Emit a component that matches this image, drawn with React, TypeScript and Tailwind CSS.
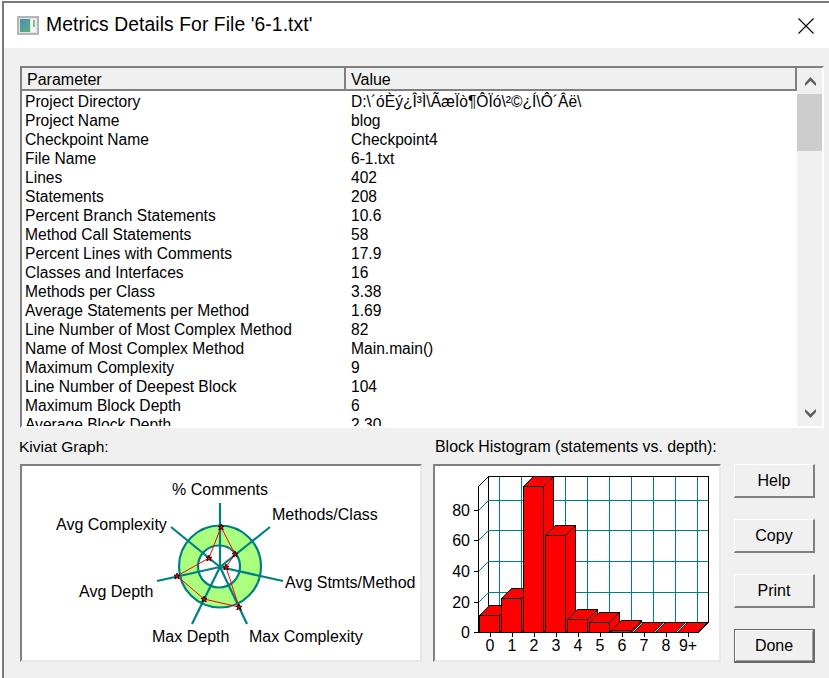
const ROWS: [string, string][] = [
  ["Project Directory", "D:\\´óÈý¿Î³Ì\\ÃæÏò¶ÔÏó\\²©¿Í\\Ô´Âë\\"],
  ["Project Name", "blog"],
  ["Checkpoint Name", "Checkpoint4"],
  ["File Name", "6-1.txt"],
  ["Lines", "402"],
  ["Statements", "208"],
  ["Percent Branch Statements", "10.6"],
  ["Method Call Statements", "58"],
  ["Percent Lines with Comments", "17.9"],
  ["Classes and Interfaces", "16"],
  ["Methods per Class", "3.38"],
  ["Average Statements per Method", "1.69"],
  ["Line Number of Most Complex Method", "82"],
  ["Name of Most Complex Method", "Main.main()"],
  ["Maximum Complexity", "9"],
  ["Line Number of Deepest Block", "104"],
  ["Maximum Block Depth", "6"],
  ["Average Block Depth", "2.30"],
];

const TEAL = "#008080";

function Star({ x, y }: { x: number; y: number }) {
  return (
    <path
      d={`M${x} ${y - 3}L${x + 0.8} ${y - 0.8}L${x + 3} ${y - 0.8}L${x + 1.4} ${y + 0.7}L${x + 2.2} ${y + 3}L${x} ${y + 1.6}L${x - 2.2} ${y + 3}L${x - 1.4} ${y + 0.7}L${x - 3} ${y - 0.8}L${x - 0.8} ${y - 0.8}Z`}
      fill="#e00000"
      stroke="#000"
      strokeWidth={0.8}
    />
  );
}

function Kiviat() {
  const spokes = [
    [220, 503],
    [270, 527],
    [283, 581],
    [247, 624],
    [192, 624],
    [157, 581],
    [171, 527],
  ];
  const pts: [number, number][] = [
    [221, 527],
    [235, 554],
    [226, 567],
    [239, 607],
    [204, 599],
    [177, 576],
    [209, 558],
  ];
  const labels: [string, number, number][] = [
    ["% Comments", 172, 495],
    ["Methods/Class", 272, 520],
    ["Avg Complexity", 56, 530],
    ["Avg Stmts/Method", 285, 588],
    ["Avg Depth", 79, 597],
    ["Max Depth", 152, 642],
    ["Max Complexity", 249, 642],
  ];
  return (
    <svg width="398" height="194" viewBox="22 466 398 194" className="block">
      <circle cx="220" cy="566.5" r="41" fill="#aaff7f" stroke={TEAL} strokeWidth="2.2" />
      <circle cx="219" cy="566.5" r="21" fill="#fff" stroke={TEAL} strokeWidth="2.2" />
      {spokes.map(([x, y]) => (
        <line key={`${x}-${y}`} x1="220" y1="567" x2={x} y2={y} stroke={TEAL} strokeWidth="2.2" />
      ))}
      <polygon points={pts.map((p) => p.join(",")).join(" ")} fill="none" stroke="#ff0000" strokeWidth="1" />
      {pts.map(([x, y]) => (
        <Star key={`${x}-${y}`} x={x} y={y} />
      ))}
      {labels.map(([t, x, y]) => (
        <text key={t} x={x} y={y} fontSize="16" fill="#000">
          {t}
        </text>
      ))}
    </svg>
  );
}

function Histogram() {
  const tops = [615, 598, 486, 535, 619, 622, 630, 632, 632, 632];
  const xLabels = ["0", "1", "2", "3", "4", "5", "6", "7", "8", "9+"];
  const yLabels: [string, number][] = [
    ["80", 510],
    ["60", 540],
    ["40", 571],
    ["20", 602],
    ["0", 632],
  ];
  return (
    <svg width="284" height="194" viewBox="435 466 284 194" className="block" shapeRendering="crispEdges">
      <rect x="488.5" y="476.5" width="220" height="146" fill="#fff" stroke="#000" />
      {[500, 530, 561, 592].map((y) => (
        <g key={y}>
          <line x1="489" y1={y + 0.5} x2="708" y2={y + 0.5} stroke={TEAL} />
          <line x1="478.5" y1={y + 10.5} x2="488.5" y2={y + 0.5} stroke={TEAL} />
          <line x1="474" y1={y + 10.5} x2="479" y2={y + 10.5} stroke="#000" />
        </g>
      ))}
      {[499, 521, 543, 565, 587, 609, 631, 653, 675, 697].map((x) => (
        <line key={x} x1={x + 0.5} y1="477" x2={x + 0.5} y2="622" stroke={TEAL} />
      ))}
      <line x1="478.5" y1="486.5" x2="488.5" y2="476.5" stroke="#000" />
      <line x1="478.5" y1="486" x2="478.5" y2="633" stroke="#000" />
      <line x1="474" y1="632.5" x2="698" y2="632.5" stroke="#000" />
      <polygon points="698.5,632.5 708.5,622.5 698.5,622.5" fill="#ff0000" stroke="#000" />
      {tops.map((t, i) => {
        const x = 479.5 + 22 * i;
        const r = x + 20;
        const y = t + 0.5;
        return (
          <g key={i} fill="#ff0000" stroke="#000">
            <polygon points={`${x},${y} ${x + 10},${y - 10} ${r + 10},${y - 10} ${r},${y}`} />
            <polygon points={`${r},${y} ${r + 10},${y - 10} ${r + 10},622.5 ${r},632.5`} />
            <rect x={x} y={y} width="20" height={632.5 - y} />
            <line x1={x + 11} y1="633" x2={x + 11} y2="637" />
          </g>
        );
      })}
      {xLabels.map((t, i) => (
        <text key={t} x={490 + 22 * i} y="651" fontSize="16" textAnchor="middle" fill="#000" stroke="none">
          {t}
        </text>
      ))}
      {yLabels.map(([t, y]) => (
        <text key={t} x="470" y={y + 6} fontSize="16" textAnchor="end" fill="#000">
          {t}
        </text>
      ))}
    </svg>
  );
}

function Btn({ label, isDefault }: { label: string; isDefault?: boolean }) {
  return (
    <button
      className={
        isDefault
          ? "w-[81px] h-[34px] bg-[#f0f0f0] text-[16px] text-black border border-r-2 border-b-2 border-[#696969] shadow-[inset_1px_1px_0_#fff,inset_-1px_-1px_0_#a0a0a0]"
          : "w-[81px] h-[34px] bg-[#f0f0f0] text-[16px] text-black border-t border-l border-t-[#fff] border-l-[#fff] border-r-2 border-b-2 border-r-[#808080] border-b-[#808080]"
      }
    >
      {label}
    </button>
  );
}

function AppIcon() {
  return (
    <div className="w-[22px] h-[19px] rounded-[1px] border-2 border-[#b4b4b4] bg-[#e4e4e4] flex p-[1px] gap-[1px]">
      <div className="w-[10px] bg-gradient-to-br from-[#4a8db5] to-[#5fb070]" />
      <div className="flex-1 bg-[#f4f4f4] flex justify-end pr-[1px] pt-[1px]">
        <div className="w-[2px] h-[7px] bg-[#7fbf8f]" />
      </div>
    </div>
  );
}

export default function App() {
  return (
    <div className="w-[829px] h-[678px] overflow-hidden bg-white font-['Liberation_Sans',Arial,sans-serif] text-black pl-[2px] pt-[1px]">
      <div className="h-full border-t-2 border-l-2 border-[#7a7a7a]">
        {/* title bar */}
        <div className="h-[45px] bg-white flex items-center pl-[13px] pr-[8px]">
          <AppIcon />
          <span className="ml-[7px] text-[19.3px] tracking-[0.09px]">Metrics Details For File '6-1.txt'</span>
          <svg className="ml-auto" width="30" height="30" viewBox="0 0 30 30" fill="none" stroke="#000" strokeWidth="1.1">
            <path d="M7.5 7.5L22.5 22.5M22.5 7.5L7.5 22.5" />
          </svg>
        </div>

        <div className="h-[631px] bg-[#f0f0f0] pl-[16px] pt-[18px]">
          {/* metrics list */}
          <div className="w-[804px] h-[362px] flex overflow-hidden border-t-2 border-l-2 border-t-[#808080] border-l-[#808080] border-r-2 border-b-2 border-r-[#fff] border-b-[#fff] bg-white">
            <div className="flex-1 min-w-0">
              <div className="flex h-[23px] bg-[#f0f0f0] border-b-2 border-[#808080] text-[16px]">
                <div className="w-[324px] pl-[5px] border-r-2 border-[#808080] leading-[23px]">Parameter</div>
                <div className="flex-1 pl-[5px] border-r-2 border-[#808080] leading-[23px]">Value</div>
              </div>
              <div className="pt-[1px] text-[15.6px] leading-[19px]">
                {ROWS.map(([k, v]) => (
                  <div key={k} className="flex h-[19px] whitespace-nowrap">
                    <div className="w-[329px] pl-[3px]">{k}</div>
                    <div className="flex-1">{v}</div>
                  </div>
                ))}
              </div>
            </div>
            <div className="w-[25px] bg-[#f0f0f0] flex flex-col items-center shrink-0">
              <div className="h-[26px] flex items-center justify-center pl-[2px]">
                <svg width="11" height="9" viewBox="0 0 11 9" fill="#606060">
                  <polygon points="0,6 5.5,0 11,6 11,9 5.5,4 0,9" />
                </svg>
              </div>
              <div className="w-full h-[57px] bg-[#cdcdcd]" />
              <div className="flex-1" />
              <div className="h-[26px] flex items-center justify-center pl-[2px]">
                <svg width="11" height="9" viewBox="0 0 11 9" fill="#606060">
                  <polygon points="0,3 5.5,9 11,3 11,0 5.5,5 0,0" />
                </svg>
              </div>
            </div>
          </div>

          {/* graphs */}
          <div className="flex mt-[8px]">
            <div className="w-[402px]">
              <div className="h-[28px] text-[15.5px] leading-[22px] -ml-[1px]">Kiviat Graph:</div>
              <div className="w-[402px] h-[198px] bg-white border-t-2 border-l-2 border-t-[#808080] border-l-[#808080] border-r-2 border-b-2 border-r-[#e8e8e8] border-b-[#e8e8e8]">
                <Kiviat />
              </div>
            </div>
            <div className="w-[288px] ml-[11px]">
              <div className="h-[28px] text-[15.9px] leading-[22px] whitespace-nowrap pl-[2px]">Block Histogram (statements vs. depth):</div>
              <div className="w-[288px] h-[198px] bg-white border-t-2 border-l-2 border-t-[#808080] border-l-[#808080] border-r-2 border-b-2 border-r-[#e8e8e8] border-b-[#e8e8e8]">
                <Histogram />
              </div>
            </div>
            <div className="ml-[13px] pt-[28px] flex flex-col gap-[21px]">
              <Btn label="Help" />
              <Btn label="Copy" />
              <Btn label="Print" />
              <Btn label="Done" isDefault />
            </div>
          </div>
        </div>
      </div>
    </div>
  );
}
